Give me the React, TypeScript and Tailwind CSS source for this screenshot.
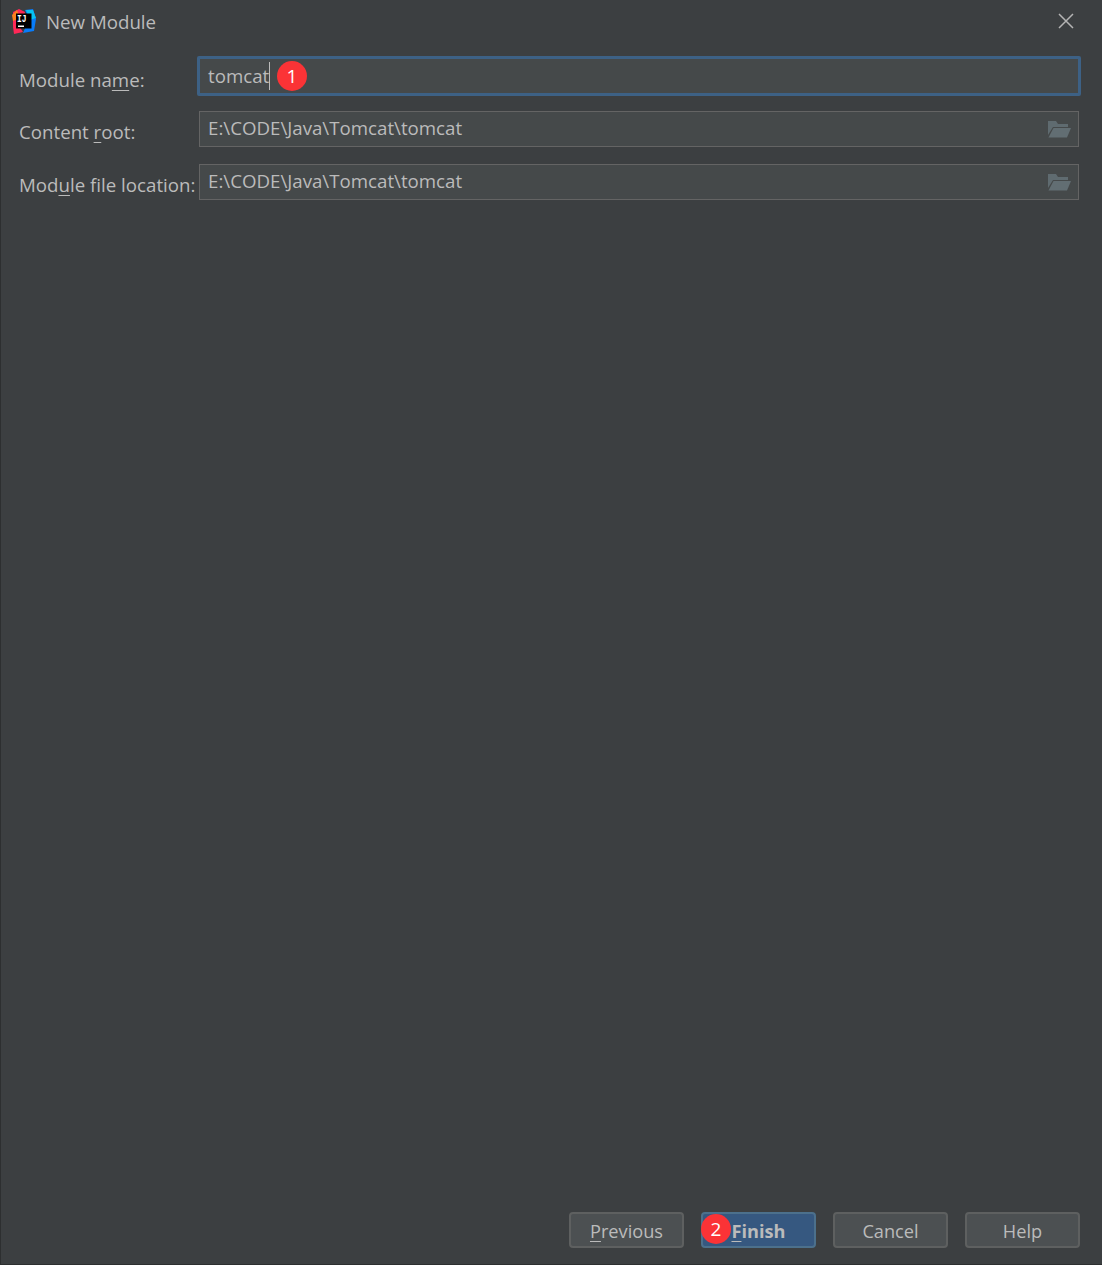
import React from 'react';

const FolderIcon = () => (
  <svg width="24" height="18" viewBox="0 0 24 18" className="shrink-0">
    <path d="M1 1h8l2 3h10v3H6L1 15z" fill="#5f6b70" />
    <path d="M6.500 8H24l-4 9.500H1.500z" fill="#626e73" />
  </svg>
);

const IdeaLogo = () => (
  <svg width="25" height="25" viewBox="0 0 25 25" className="shrink-0">
    <path d="M2 3 8 0l6 3-4 13-8 2z" fill="#fe2857" />
    <path d="M1 6l5-5 3 8-7 3z" fill="#fc801d" />
    <path d="M2 18l1 7 9-2-6-9z" fill="#fe2857" />
    <path d="M14 1l8-1 3 10-2 12-11 2 6-14z" fill="#087cfa" />
    <path d="M15 1h7l3 8-6 2z" fill="#07c3f2" />
    <rect x="5" y="4.500" width="15.500" height="15" fill="#000" />
    <text x="6" y="12.500" fill="#fff" fontSize="10" fontWeight="700" textLength="9.500" lengthAdjust="spacingAndGlyphs" fontFamily="'Liberation Mono', monospace">IJ</text>
    <rect x="7" y="16.500" width="6" height="1.500" fill="#fff" />
  </svg>
);

const Badge = ({ n, className }: { n: number; className: string }) => (
  <div className={`absolute w-[30px] h-[30px] rounded-full bg-[#fb3336] text-white text-[19px] flex items-center justify-center ${className}`}>
    {n}
  </div>
);

const PathField = ({ label, hotkey, value }: { label: [string, string]; hotkey: string; value: string }) => (
  <div className="flex items-center h-[36px]">
    <label className="w-[198px] pl-[18px] pt-[7px] whitespace-nowrap">
      {label[0]}
      <u className="underline-offset-3">{hotkey}</u>
      {label[1]}
    </label>
    <div className="flex-1 h-[36px] border border-[#646464] bg-[#45494a] flex items-center justify-between pl-[8px] pr-[7px]">
      <span className="-mt-[2px]">{value}</span>
      <FolderIcon />
    </div>
    <div className="w-[23px]" />
  </div>
);

const FooterButton = ({ children, primary }: { children: React.ReactNode; primary?: boolean }) => (
  <button
    className={`w-[115px] h-[36px] pt-[3px] rounded-[4px] border-2 text-[18.2px] flex items-center justify-center ${
      primary ? 'bg-[#365880] border-[#4c708c] font-bold' : 'bg-[#4c5052] border-[#5e6060]'
    }`}
  >
    {children}
  </button>
);

export default function App() {
  return (
    <div className="relative w-[1102px] h-[1265px] flex flex-col bg-[#3c3f41] border-l border-b border-[#2d2f30] text-[#bbbbbb] text-[18.7px] font-['Open_Sans',sans-serif] overflow-hidden">
      <div className="flex items-center justify-between h-[44px] pl-[10px] pr-[28px]">
        <div className="flex items-center gap-[10px]">
          <IdeaLogo />
          <span>New Module</span>
        </div>
        <svg width="16" height="16" viewBox="0 0 16 16" stroke="#b4b4b4" strokeWidth="1.500" className="-mt-[2px]">
          <path d="M1 1l14 14M15 1L1 15" />
        </svg>
      </div>

      <div className="flex flex-col mt-[12px]">
        <div className="relative flex items-center h-[40px]">
          <label className="w-[196px] pl-[18px] pt-[8px]">
            Module na<u className="underline-offset-3">m</u>e:
          </label>
          <div className="w-[884px] h-[40px] rounded-[2px] border-[3px] border-[#3d6185] bg-[#45494a] flex items-center pl-[8px]">
            <span className="-mt-[1px] border-r border-[#bbbbbb] leading-[28px]">tomcat</span>
          </div>
          <Badge n={1} className="left-[276px] top-[5px]" />
        </div>
        <div className="flex flex-col gap-[17px] mt-[15px]">
          <PathField label={['Content ', 'oot:']} hotkey="r" value="E:\CODE\Java\Tomcat\tomcat" />
          <PathField label={['Mod', 'le file location:']} hotkey="u" value="E:\CODE\Java\Tomcat\tomcat" />
        </div>
      </div>

      <div className="flex justify-end gap-[17px] mt-auto mb-[16px] pr-[22px]">
        <FooterButton><span><u className="underline-offset-3">P</u>revious</span></FooterButton>
        <div className="relative">
          <FooterButton primary><span><u className="underline-offset-3">F</u>inish</span></FooterButton>
          <Badge n={2} className="left-0 top-[2px]" />
        </div>
        <FooterButton>Cancel</FooterButton>
        <FooterButton>Help</FooterButton>
      </div>
    </div>
  );
}
